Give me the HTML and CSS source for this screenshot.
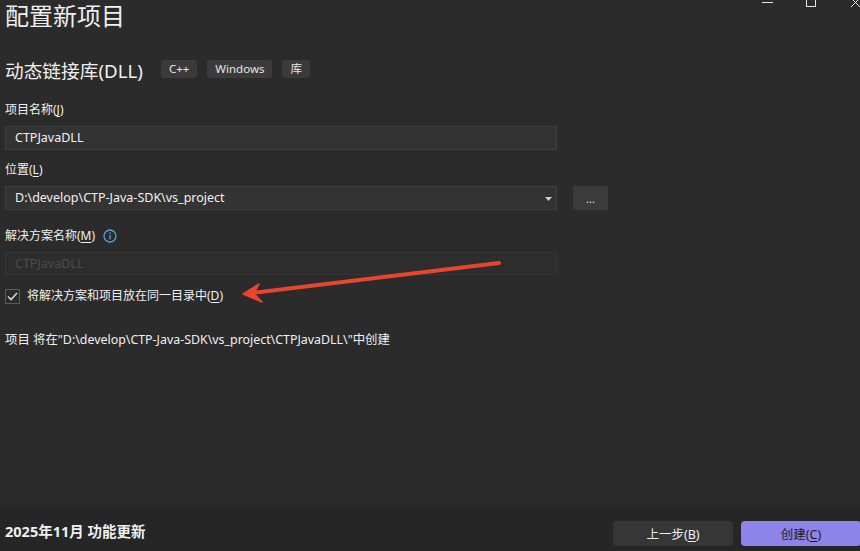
FILE: index.html
```html
<!DOCTYPE html>
<html lang="zh-CN">
<head>
    <meta charset="UTF-8">
    <meta name="viewport" content="width=device-width, initial-scale=1.0">
    <title>配置新项目</title>
    <link rel="stylesheet" href="styles.css">
</head>
<body>
    <div class="window">
        <div class="controls">
            <span class="ctl ctl-min"></span>
            <span class="ctl ctl-max"></span>
            <svg class="ctl-close" width="11" height="8" viewBox="0 0 11 8">
                <path d="M1 -2 L10 7 M10 -2 L1 7" stroke="#e6e6e6" stroke-width="1" fill="none"/>
            </svg>
        </div>

        <div class="main">
            <h1 class="title">配置新项目</h1>

            <div class="template">
                <span class="template-name">动态链接库(DLL)</span>
                <span class="tag">C++</span>
                <span class="tag">Windows</span>
                <span class="tag">库</span>
            </div>

            <label class="field-label first"><span>项目名称(<u>J</u>)</span></label>
            <div class="input">CTPJavaDLL</div>

            <label class="field-label"><span>位置(<u>L</u>)</span></label>
            <div class="row">
                <div class="input select">
                    D:\develop\CTP-Java-SDK\vs_project
                    <svg class="caret" width="7" height="4" viewBox="0 0 7 4"><path d="M0 0 H7 L3.5 4 Z" fill="#d0d0d0"/></svg>
                </div>
                <div class="browse">...</div>
            </div>

            <label class="field-label section">
                <span>解决方案名称(<u>M</u>)</span>
                <svg class="info" width="14" height="14" viewBox="0 0 14 14">
                    <circle cx="7" cy="7" r="6" fill="none" stroke="#4fa3dd" stroke-width="1.3"/>
                    <rect x="6.3" y="6" width="1.4" height="4.5" fill="#4fa3dd"/>
                    <rect x="6.3" y="3.4" width="1.4" height="1.5" fill="#4fa3dd"/>
                </svg>
            </label>
            <div class="input disabled">CTPJavaDLL</div>

            <div class="check-row">
                <span class="checkbox">
                    <svg width="11" height="9" viewBox="0 0 11 9"><path d="M1 4.5 L4 7.5 L10 1" stroke="#d4d4d4" stroke-width="1.6" fill="none"/></svg>
                </span>
                <span>将解决方案和项目放在同一目录中(<u>D</u>)</span>
            </div>

            <p class="path-note">项目 将在"D:\develop\CTP-Java-SDK\vs_project\CTPJavaDLL\"中创建</p>
        </div>

        <div class="footer">
            <span class="news">2025年11月 功能更新</span>
            <div class="buttons">
                <button class="btn">上一步(<u>B</u>)</button>
                <button class="btn primary">创建(<u>C</u>)</button>
            </div>
        </div>

        <svg class="arrow" width="860" height="551" viewBox="0 0 860 551">
            <path d="M499 263 L252 293" stroke="#e8452f" stroke-width="4" stroke-linecap="round" fill="none"/>
            <path d="M243 294 L259 284 L254 293.5 L262 302 Z" fill="#e8452f" stroke="#e8452f" stroke-width="1.5" stroke-linejoin="round"/>
        </svg>
    </div>
</body>
</html>
```

FILE: styles.css
```css
* {
    box-sizing: border-box;
}

body {
    margin: 0;
    padding: 0;
    background-color: #2b2b2b;
    color: #f0f0f0;
    font-family: "Noto Sans", "Noto Sans CJK SC", sans-serif;
    font-size: 12px;
    overflow: hidden;
}

.window {
    position: relative;
    width: 860px;
    height: 551px;
    display: flex;
    flex-direction: column;
}

.controls {
    position: absolute;
    top: 0;
    right: 0;
    width: 110px;
    height: 10px;
}

.ctl {
    position: absolute;
    border-color: #e6e6e6;
    border-style: solid;
}

.ctl-min {
    left: 12px;
    top: 2px;
    width: 11px;
    height: 0;
    border-width: 1px 0 0 0;
}

.ctl-max {
    left: 56px;
    top: -2px;
    width: 10px;
    height: 9px;
    border-width: 1px;
}

.ctl-close {
    position: absolute;
    left: 100px;
    top: 0;
}

.main {
    flex: 1;
    padding: 0 5px;
    display: flex;
    flex-direction: column;
    align-items: flex-start;
}

.title {
    margin: 0;
    font-size: 24px;
    font-weight: normal;
    line-height: 32px;
}

.template {
    margin-top: 23px;
    height: 28px;
    display: flex;
    align-items: center;
    gap: 10px;
}

.template-name {
    font-size: 18.7px;
    margin-right: 8px;
}

.tag {
    height: 18px;
    padding: 0 8px;
    background-color: #3b3b3b;
    border-radius: 3px;
    font-size: 11.5px;
    line-height: 18px;
    color: #e6e6e6;
}

.tag:first-of-type {
    padding: 0 10px;
}

.field-label {
    display: flex;
    align-items: center;
    gap: 8px;
    margin-top: 10px;
    line-height: 20px;
    font-size: 12px;
}

.field-label.first {
    margin-top: 17px;
}

.field-label.section {
    margin-top: 16px;
}

.field-label u,
.check-row u,
.btn u {
    text-underline-offset: 2px;
}

.input {
    position: relative;
    width: 552px;
    height: 24px;
    margin-top: 6px;
    padding: 0 9px;
    background-color: #333333;
    border: 1px solid #3e3e3e;
    font-size: 12.5px;
    line-height: 22px;
    color: #f0f0f0;
}

.row {
    display: flex;
    gap: 16px;
    margin-top: 6px;
}

.row .input {
    margin-top: 0;
}

.caret {
    position: absolute;
    right: 4px;
    top: 10px;
}

.browse {
    width: 35px;
    height: 24px;
    background-color: #3b3b3b;
    text-align: center;
    font-size: 11px;
    line-height: 26px;
    color: #e6e6e6;
}

.info {
    display: block;
}

.input.disabled {
    height: 23px;
    background-color: #2d2d2d;
    border-color: #363636;
    color: #4b4b4b;
}

.check-row {
    margin-top: 11px;
    display: flex;
    align-items: center;
    gap: 7px;
    line-height: 20px;
}

.checkbox {
    width: 15px;
    height: 15px;
    border: 1px solid #5c5c5c;
    display: flex;
    align-items: center;
    justify-content: center;
}

.path-note {
    margin: 24px 0 0;
    line-height: 20px;
    font-size: 12.4px;
}

.footer {
    height: 46px;
    padding: 16px 0 0 5px;
    background-color: #262626;
    display: flex;
    justify-content: space-between;
    align-items: flex-start;
}

.news {
    font-size: 14.5px;
    font-weight: bold;
    line-height: 20px;
}

.buttons {
    display: flex;
    gap: 8px;
    margin-right: -1px;
}

.btn {
    width: 120px;
    height: 25px;
    border: none;
    border-radius: 4px;
    background-color: #363636;
    color: #f0f0f0;
    font-family: inherit;
    font-size: 12.5px;
    padding: 0;
}

.btn.primary {
    background-color: #8e83e8;
    color: #1c1c1c;
}

.arrow {
    position: absolute;
    left: 0;
    top: 0;
    pointer-events: none;
}
```
